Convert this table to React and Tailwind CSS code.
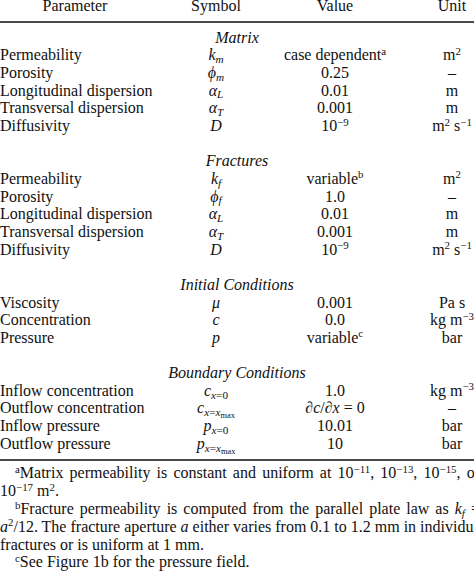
import React from "react";

const F = { fontFamily: '"Liberation Serif", "Times New Roman", serif' };

function Sup({ children }) {
  return <sup className="text-[0.68em] not-italic">{children}</sup>;
}
function Sub({ children, className = "" }) {
  return <sub className={"text-[0.7em] " + className}>{children}</sub>;
}

const ROW = "grid grid-cols-[170px_92px_146px_88px] w-[496px] leading-[17.67px] h-[17.67px]";

function Row({ p, s, v, u }) {
  return (
    <div className={ROW}>
      <div className="whitespace-nowrap">{p}</div>
      <div className="text-center whitespace-nowrap">{s}</div>
      <div className="text-center whitespace-nowrap">{v}</div>
      <div className="text-center whitespace-nowrap">{u}</div>
    </div>
  );
}

function Title({ children }) {
  return <div className="w-[474px] text-center italic leading-[17.67px] h-[17.67px]">{children}</div>;
}
function Blank() {
  return <div className="h-[17.67px]" />;
}

const I = ({ children }) => <span className="italic">{children}</span>;

const m2 = <>m<Sup>2</Sup></>;
const m2s = <>m<Sup>2</Sup> s<Sup>−1</Sup></>;
const kgm3 = <>kg m<Sup>−3</Sup></>;
const e9 = <>10<Sup>−9</Sup></>;
const xmax = <Sub className="italic"><span>x</span><span className="not-italic">=</span><span>x</span><sub className="text-[0.75em] not-italic">max</sub></Sub>;

function FLine({ children, last = false, indent = false }) {
  return (
    <div
      className={
        "w-[480px] whitespace-nowrap leading-[17.8px] h-[17.8px] " +
        (last ? "text-left " : "text-justify [text-align-last:justify] ") +
        (indent ? "pl-[15px]" : "")
      }
    >
      {children}
    </div>
  );
}

export default function App() {
  return (
    <div className="w-[474px] h-[573px] overflow-hidden bg-white text-[#111] text-[16px]" style={F}>
      <div className="mt-[-3px]">
        <div className={ROW}>
          <div className="w-[150px] text-center">Parameter</div>
          <div className="text-center">Symbol</div>
          <div className="text-center">Value</div>
          <div className="text-center">Unit</div>
        </div>
      </div>
      <div className="mt-[6px] h-[2px] w-[474px] bg-[#4a4a4a]" />
      <div className="mt-[6px]">
        <Title>Matrix</Title>
        <Row p="Permeability" s={<I>k<Sub>m</Sub></I>} v={<>case dependent<Sup>a</Sup></>} u={m2} />
        <Row p="Porosity" s={<I>ϕ<Sub>m</Sub></I>} v="0.25" u="–" />
        <Row p="Longitudinal dispersion" s={<I>α<Sub>L</Sub></I>} v="0.01" u="m" />
        <Row p="Transversal dispersion" s={<I>α<Sub>T</Sub></I>} v="0.001" u="m" />
        <Row p="Diffusivity" s={<I>D</I>} v={e9} u={m2s} />
        <Blank />
        <Title>Fractures</Title>
        <Row p="Permeability" s={<I>k<Sub>f</Sub></I>} v={<>variable<Sup>b</Sup></>} u={m2} />
        <Row p="Porosity" s={<I>ϕ<Sub>f</Sub></I>} v="1.0" u="–" />
        <Row p="Longitudinal dispersion" s={<I>α<Sub>L</Sub></I>} v="0.01" u="m" />
        <Row p="Transversal dispersion" s={<I>α<Sub>T</Sub></I>} v="0.001" u="m" />
        <Row p="Diffusivity" s={<I>D</I>} v={e9} u={m2s} />
        <Blank />
        <Title>Initial Conditions</Title>
        <Row p="Viscosity" s={<I>μ</I>} v="0.001" u="Pa s" />
        <Row p="Concentration" s={<I>c</I>} v="0.0" u={kgm3} />
        <Row p="Pressure" s={<I>p</I>} v={<>variable<Sup>c</Sup></>} u="bar" />
        <Blank />
        <Title>Boundary Conditions</Title>
        <Row p="Inflow concentration" s={<I>c<Sub><span>x</span><span className="not-italic">=0</span></Sub></I>} v="1.0" u={kgm3} />
        <Row p="Outflow concentration" s={<I>c{xmax}</I>} v={<><I>∂c</I>/<I>∂x</I> = 0</>} u="–" />
        <Row p="Inflow pressure" s={<I>p<Sub><span>x</span><span className="not-italic">=0</span></Sub></I>} v="10.01" u="bar" />
        <Row p="Outflow pressure" s={<I>p{xmax}</I>} v="10" u="bar" />
      </div>
      <div className="mt-[7px] h-[2px] w-[474px] bg-[#4a4a4a]" />
      <div className="mt-[3px]">
        <FLine indent>
          <Sup>a</Sup>Matrix permeability is constant and uniform at 10<Sup>−11</Sup>, 10<Sup>−13</Sup>, 10<Sup>−15</Sup>, or
        </FLine>
        <FLine last>
          10<Sup>−17</Sup> m<Sup>2</Sup>.
        </FLine>
        <FLine indent>
          <Sup>b</Sup>Fracture permeability is computed from the parallel plate law as <I>k<Sub>f</Sub></I> =
        </FLine>
        <FLine>
          <I>a</I><Sup>2</Sup>/12. The fracture aperture <I>a</I> either varies from 0.1 to 1.2 mm in individual
        </FLine>
        <FLine last>fractures or is uniform at 1 mm.</FLine>
        <FLine last indent>
          <Sup>c</Sup>See Figure 1b for the pressure field.
        </FLine>
      </div>
    </div>
  );
}
